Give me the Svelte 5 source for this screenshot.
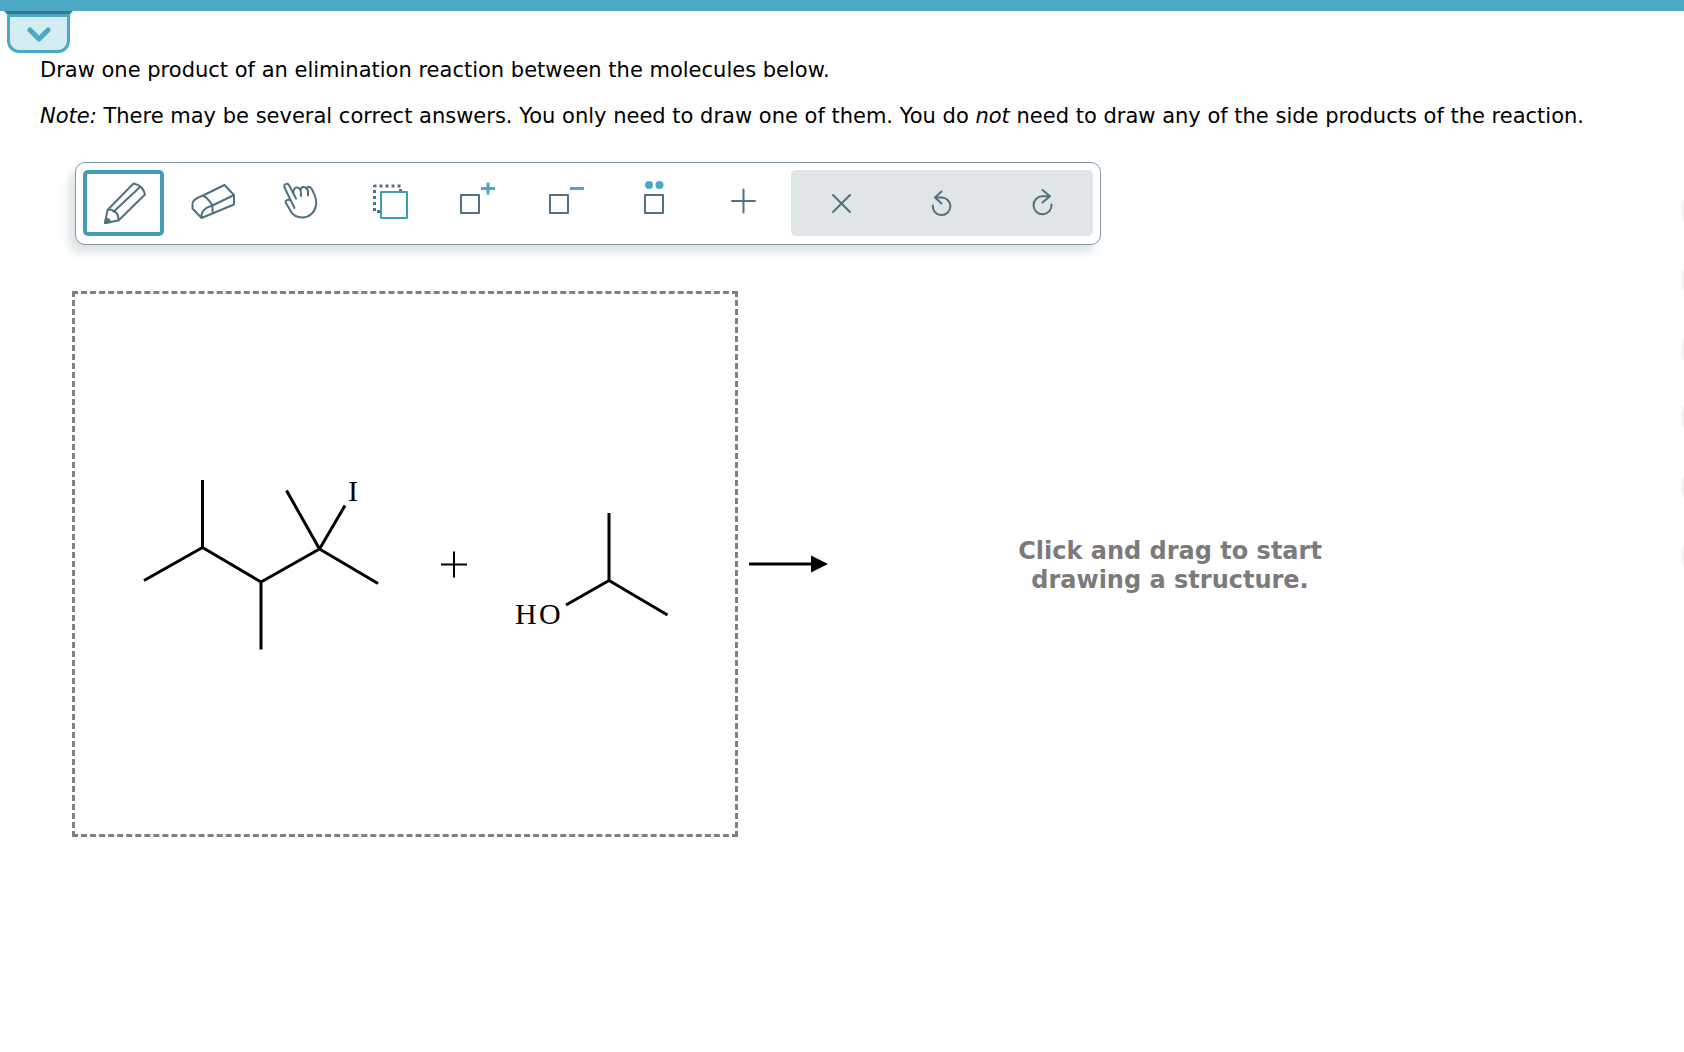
<script>
  const tools = ['Draw', 'Erase', 'Move', 'Select', 'Positive charge', 'Negative charge', 'Lone pair', 'Add molecule'];
  const actions = ['Clear', 'Undo', 'Redo'];
  const sideItems = [1, 2, 3, 4, 5, 6];
  let active = $state('Draw');
</script>

{#snippet icon(name)}
  <svg class="icon" viewBox="0 0 60 60" aria-hidden="true">
    {#if name === 'Draw'}
      <path d="M12 50 14.500 37 40.500 10.500Q50 12.500 52 21.500L25.500 47.500ZM14.500 37Q18 35.500 20.800 38.500Q25.500 39.500 25.500 47.500M20.800 38.500 47 14" />
      <path class="solid" d="M12 50 12.800 46Q16.500 45.500 17 49Z" />
    {:else if name === 'Erase'}
      <path d="M21 22.500 42.500 12 52 22V31.500L19.500 45 10.500 35.500V30.500Q11 26 21 22.500ZM21 22.500Q26 25 30.500 32.500V40.500M30.500 32.500 52 22M19.500 45V42Q20.500 35 30.500 32.500" />
    {:else if name === 'Move'}
      <path d="M24.500 35 14.500 14.500C13 11 17.500 9.500 19.200 12.500L26 25.500M23.500 20C22.500 13.500 30 12 31 20V23M30.500 17.500C31 12.500 36.500 13 38 18V22.500M36.500 16C37.500 12 41.500 14 42.500 17.500C45 22 47 27 46 32.500C44.500 40 39 44.500 32.500 44.500C26.500 44.500 22.500 42 20 37C18.500 34 16.500 31.500 15.600 29.500C15.200 27 18 26.500 20 27" />
    {:else if name === 'Select'}
      <path class="dots" d="M21 38.500H15.500V13H41.500V18" />
      <path class="frame" d="M22 19H48V45H22Z" />
    {:else if name === 'Positive charge'}
      <path d="M14 22H32V40H14Z" />
      <path class="accent" d="M34 15.500H48M41 9.500V21.500" />
    {:else if name === 'Negative charge'}
      <path d="M14 22H32V40H14Z" />
      <path class="accent" d="M34 15.500H48" />
    {:else if name === 'Lone pair'}
      <path d="M21 22H39V40H21Z" />
      <circle class="dot" cx="25" cy="12" r="4" />
      <circle class="dot" cx="35.500" cy="12" r="4" />
    {:else if name === 'Add molecule'}
      <path d="M19 28H42M30.500 16.500V39.500" />
    {:else if name === 'Clear'}
      <path d="M22 22 39 39M39 22 22 39" />
    {:else if name === 'Undo'}
      <path d="M20.800 32.500A8.800 8.800 0 1 0 29.600 24.500H23M29.500 18.500 23 24.500 29.500 30.500" />
    {:else}
      <path d="M38.500 31.500A9 9 0 1 1 29.500 23.300H37M29.500 17 37 23.300 29.500 29.500" />
    {/if}
  </svg>
{/snippet}

<div class="page">
  <header><button class="tab" aria-label="Expand header">
    <svg viewBox="0 0 24 16" aria-hidden="true"><path d="M3 3 12 12 21 3" /></svg>
  </button></header>

  <main>
    <p>Draw one product of an elimination reaction between the molecules below.</p>
    <p><em>Note:</em> There may be several correct answers. You only need to draw one of them. You do <em>not</em> need to draw any of the side products of the reaction.</p>

    <div class="toolbar" role="toolbar" aria-label="Drawing tools">
      <div class="tools">
        {#each tools as tool}
          <button class:active={active === tool} aria-label={tool} aria-pressed={active === tool} onclick={() => (active = tool)}>{@render icon(tool)}</button>
        {/each}
      </div>
      <div class="actions">
        {#each actions as action}
          <button aria-label={action}>{@render icon(action)}</button>
        {/each}
      </div>
    </div>

    <section class="reaction">
      <div class="reactants">
        <svg class="molecules" viewBox="0 0 660 540" role="img" aria-label="Reactant molecules">
          <path d="M127.500 186V253.500L186 288V355.500M69 286.500 127.500 253.500M186 288 244.500 255 303 289.500M211.500 196.500 244.500 255 270 211.500" />
          <path d="M534 219V286.500L491 311M534 286.500 592.500 321" />
          <path class="plus" d="M366 270.500H392M379 257.500V283.500" />
          <text x="273" y="207">I</text>
          <text x="440" y="330">H</text>
          <text x="464" y="330">O</text>
        </svg>
      </div>
      <svg class="arrow" viewBox="0 0 80 18" role="img" aria-label="yields">
        <path d="M1 9H64" /><path class="head" d="M62 0.500 79 9 62 17.500Z" />
      </svg>
      <div class="product"><span>Click and drag to start drawing a structure.</span></div>
    </section>
  </main>

  <div class="side">
    {#each sideItems as item}<button aria-label={`Panel ${item}`}></button>{/each}
  </div>
</div>

<style>
  :global(body) { margin: 0; background: #fff; }
  .page { position: relative; min-height: 100vh; overflow: hidden; font: 21px/24px Verdana, "DejaVu Sans", sans-serif; color: #000; }
  button { padding: 0; border: 0; background: none; cursor: pointer; }
  header { height: 42px; border-top: 11px solid #4ba9c6; }
  .tab { position: relative; display: flex; align-items: center; justify-content: center; box-sizing: border-box; margin-left: 7px; width: 63px; height: 42px; padding-top: 2px; border: 3px solid #4ba9c6; border-top-width: 6px; border-radius: 0 0 12px 12px; background: #d3edf2; }
  .tab::before { content: ""; position: absolute; left: -6px; right: -6px; top: -6px; height: 3px; background: #327b8f; clip-path: polygon(0 0, 100% 0, calc(100% - 3px) 100%, 3px 100%); }
  .tab svg { width: 24px; height: 16px; fill: none; stroke: #4ba9c6; stroke-width: 5; stroke-linecap: round; stroke-linejoin: round; }
  main { padding: 5px 40px 0; }
  p { margin: 0 0 22px; }
  .toolbar { display: flex; gap: 8px; box-sizing: border-box; max-width: 1026px; margin: 34px 0 0 35px; padding: 7px 7px 8px; border: 1px solid #7f9ca8; border-radius: 10px; background: #fff; box-shadow: -6px 8px 10px #dfe4e7; }
  .tools { flex: 1; display: grid; grid-template-columns: repeat(8, 1fr); gap: 8px; }
  .tools button, .actions button { display: flex; align-items: center; justify-content: center; height: 66px; box-sizing: border-box; border-radius: 5px; }
  .tools .active { border: 4px solid #429cb3; }
  .actions { display: grid; grid-template-columns: repeat(3, 1fr); width: 302px; border-radius: 5px; background: #e0e5e7; }
  .icon { flex: none; width: 60px; height: 60px; fill: none; stroke: #507180; stroke-width: 2; stroke-linecap: round; stroke-linejoin: round; }
  .icon .solid { fill: #507180; }
  .icon .dots { stroke-width: 3; stroke-dasharray: 3 3; stroke-linecap: butt; }
  .icon .frame { fill: #fff; stroke: #429cb3; }
  .icon .accent { stroke: #4ba9c6; stroke-width: 3; stroke-linecap: butt; }
  .icon .dot { fill: #4ba9c6; stroke: none; }
  .reaction { display: flex; align-items: center; margin: 46px 0 0 32px; }
  .reactants, .product { flex: 0 1 666px; box-sizing: border-box; }
  .reactants { border: 3px dashed #808080; }
  .molecules { display: block; width: 100%; fill: none; stroke: #000; stroke-width: 3; stroke-linejoin: round; }
  .molecules .plus { stroke-width: 2; }
  text { font: 30px "Liberation Serif", serif; fill: #000; stroke: none; }
  .arrow { flex: none; width: 80px; height: 18px; margin: 0 9px 0 11px; stroke: #000; stroke-width: 3; stroke-linecap: round; }
  .arrow .head { stroke: none; }
  .product { display: flex; justify-content: center; padding: 3px 2px 0 0; font-size: 24px; line-height: 29px; font-weight: bold; text-align: center; color: #7b7b7b; }
  .product span { max-width: 320px; }
  .side { position: absolute; right: -47px; top: 186px; display: grid; gap: 19px; }
  .side button { width: 50px; height: 50px; border-radius: 50%; background: #f2f2f2; }
</style>
